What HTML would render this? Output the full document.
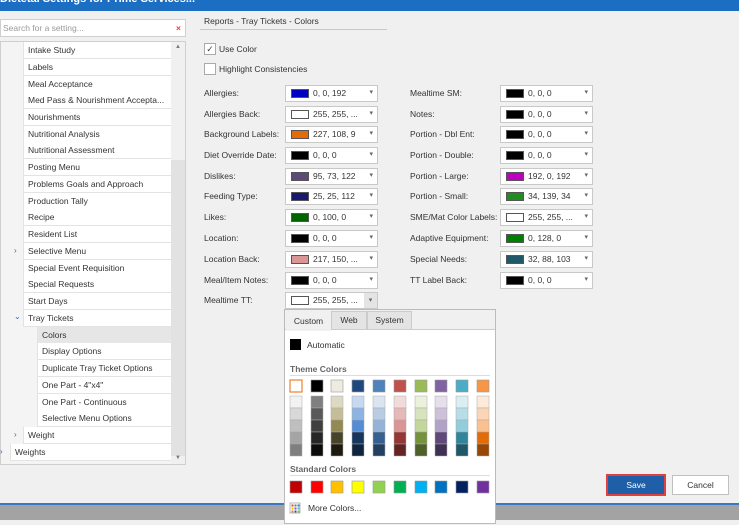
<!DOCTYPE html>
<html><head><meta charset="utf-8"><style>
*{margin:0;padding:0;box-sizing:border-box}
body{width:739px;height:520px;overflow:hidden;background:#f0f0f0;font-family:"Liberation Sans",sans-serif;font-size:8.5px;color:#333;position:relative}
.a{position:absolute}
.title{left:0;top:0;width:739px;height:11px;background:#1b6ec2;overflow:hidden}
.title div{position:absolute;left:0;top:-7px;color:#fff;font-weight:bold;font-size:11px;line-height:13px}
.tree{left:0;top:41px;width:186px;height:424px;background:#f4f4f4;border:1px solid #cfcfcf}
.it{position:absolute;height:17px;line-height:16px;background:#fff;border-bottom:1px solid #e3e3e3;border-left:1px solid #e3e3e3;right:14px;padding-left:4px;white-space:nowrap;overflow:hidden}
.sel{background:#e6e6e6}
.ex{position:absolute;font-size:8px;color:#2a6ebd}
.lbl{position:absolute;line-height:12px;white-space:nowrap}
.cb{position:absolute;width:93px;height:17px;background:#fff;border:1px solid #c8c8c8}
.cb i{position:absolute;left:5px;top:3px;width:18px;height:9px;border:1px solid #555}
.cb span{position:absolute;left:27px;top:2px;line-height:11px}
.cb b{position:absolute;right:4px;top:2px;font-weight:normal;font-size:7px;color:#666}
.chk{position:absolute;width:12px;height:12px;background:#fff;border:1px solid #aaa}
</style></head><body>
<div class="a title"><div>Dietetal Settings for Prime Services...</div></div>
<div class="a" style="left:0;top:19px;width:186px;height:18px;background:#fff;border:1px solid #cfcfcf;color:#999;line-height:16px;padding-left:2px">Search for a setting...<span style="position:absolute;right:4px;color:#e04040;font-weight:bold">×</span></div>
<div class="a tree">
<div class="it" style="left:22px;top:0">Intake Study</div>
<div class="it" style="left:22px;top:17px">Labels</div>
<div class="it" style="left:22px;top:34px">Meal Acceptance</div>
<div class="it" style="left:22px;top:50px">Med Pass &amp; Nourishment Accepta...</div>
<div class="it" style="left:22px;top:67px">Nourishments</div>
<div class="it" style="left:22px;top:84px">Nutritional Analysis</div>
<div class="it" style="left:22px;top:100px">Nutritional Assessment</div>
<div class="it" style="left:22px;top:117px">Posting Menu</div>
<div class="it" style="left:22px;top:134px">Problems Goals and Approach</div>
<div class="it" style="left:22px;top:151px">Production Tally</div>
<div class="it" style="left:22px;top:167px">Recipe</div>
<div class="it" style="left:22px;top:184px">Resident List</div>
<div class="ex" style="left:13px;top:204px">›</div>
<div class="it" style="left:22px;top:201px">Selective Menu</div>
<div class="it" style="left:22px;top:218px">Special Event Requisition</div>
<div class="it" style="left:22px;top:234px">Special Requests</div>
<div class="it" style="left:22px;top:251px">Start Days</div>
<div class="ex" style="left:13px;top:270px">⌄</div>
<div class="it" style="left:22px;top:268px">Tray Tickets</div>
<div class="it sel" style="left:36px;top:285px">Colors</div>
<div class="it" style="left:36px;top:301px">Display Options</div>
<div class="it" style="left:36px;top:318px">Duplicate Tray Ticket Options</div>
<div class="it" style="left:36px;top:335px">One Part - 4"x4"</div>
<div class="it" style="left:36px;top:352px">One Part - Continuous</div>
<div class="it" style="left:36px;top:368px">Selective Menu Options</div>
<div class="ex" style="left:13px;top:388px">›</div>
<div class="it" style="left:22px;top:385px">Weight</div>
<div class="ex" style="left:-1px;top:405px">›</div>
<div class="it" style="left:9px;top:402px">Weights</div>
<div class="a" style="right:0;top:0;width:14px;height:422px;background:#f0f0f0"></div>
<div class="a" style="right:0;top:118px;width:14px;height:296px;background:#e2e2e2"></div>
<div class="a" style="right:4px;top:2px;font-size:6px;color:#777">▲</div>
<div class="a" style="right:4px;top:413px;font-size:6px;color:#777">▼</div>
</div>

<div class="lbl" style="left:204px;top:15px">Reports - Tray Tickets - Colors</div>
<div class="a" style="left:200px;top:29px;width:187px;height:1px;background:#c8c8c8"></div>
<div class="chk" style="left:204px;top:43px;font-size:9px;line-height:10px;text-align:center;color:#444">✓</div>
<div class="lbl" style="left:219px;top:43px">Use Color</div>
<div class="chk" style="left:204px;top:63px"></div>
<div class="lbl" style="left:219px;top:63px">Highlight Consistencies</div>

<div class="lbl" style="left:204px;top:87px">Allergies:</div><div class="cb" style="left:285px;top:85px"><i style="background:#0000c0"></i><span>0, 0, 192</span><b>▾</b></div>
<div class="lbl" style="left:204px;top:108px">Allergies Back:</div><div class="cb" style="left:285px;top:106px"><i style="background:#fff"></i><span>255, 255, ...</span><b>▾</b></div>
<div class="lbl" style="left:204px;top:128px">Background Labels:</div><div class="cb" style="left:285px;top:126px"><i style="background:#e36c09"></i><span>227, 108, 9</span><b>▾</b></div>
<div class="lbl" style="left:204px;top:149px">Diet Override Date:</div><div class="cb" style="left:285px;top:147px"><i style="background:#000"></i><span>0, 0, 0</span><b>▾</b></div>
<div class="lbl" style="left:204px;top:170px">Dislikes:</div><div class="cb" style="left:285px;top:168px"><i style="background:#5f497a"></i><span>95, 73, 122</span><b>▾</b></div>
<div class="lbl" style="left:204px;top:190px">Feeding Type:</div><div class="cb" style="left:285px;top:188px"><i style="background:#191970"></i><span>25, 25, 112</span><b>▾</b></div>
<div class="lbl" style="left:204px;top:211px">Likes:</div><div class="cb" style="left:285px;top:209px"><i style="background:#006400"></i><span>0, 100, 0</span><b>▾</b></div>
<div class="lbl" style="left:204px;top:232px">Location:</div><div class="cb" style="left:285px;top:230px"><i style="background:#000"></i><span>0, 0, 0</span><b>▾</b></div>
<div class="lbl" style="left:204px;top:253px">Location Back:</div><div class="cb" style="left:285px;top:251px"><i style="background:#d99694"></i><span>217, 150, ...</span><b>▾</b></div>
<div class="lbl" style="left:204px;top:274px">Meal/Item Notes:</div><div class="cb" style="left:285px;top:272px"><i style="background:#000"></i><span>0, 0, 0</span><b>▾</b></div>
<div class="lbl" style="left:204px;top:294px">Mealtime TT:</div><div class="cb" style="left:285px;top:292px"><i style="background:#fff"></i><span>255, 255, ...</span><b style="background:#e4e4e4;right:0;top:0;width:13px;height:15px;text-align:center;line-height:15px">▾</b></div>

<div class="lbl" style="left:410px;top:87px">Mealtime SM:</div><div class="cb" style="left:500px;top:85px"><i style="background:#000"></i><span>0, 0, 0</span><b>▾</b></div>
<div class="lbl" style="left:410px;top:108px">Notes:</div><div class="cb" style="left:500px;top:106px"><i style="background:#000"></i><span>0, 0, 0</span><b>▾</b></div>
<div class="lbl" style="left:410px;top:128px">Portion - Dbl Ent:</div><div class="cb" style="left:500px;top:126px"><i style="background:#000"></i><span>0, 0, 0</span><b>▾</b></div>
<div class="lbl" style="left:410px;top:149px">Portion - Double:</div><div class="cb" style="left:500px;top:147px"><i style="background:#000"></i><span>0, 0, 0</span><b>▾</b></div>
<div class="lbl" style="left:410px;top:170px">Portion - Large:</div><div class="cb" style="left:500px;top:168px"><i style="background:#c000c0"></i><span>192, 0, 192</span><b>▾</b></div>
<div class="lbl" style="left:410px;top:190px">Portion - Small:</div><div class="cb" style="left:500px;top:188px"><i style="background:#228b22"></i><span>34, 139, 34</span><b>▾</b></div>
<div class="lbl" style="left:410px;top:211px">SME/Mat Color Labels:</div><div class="cb" style="left:500px;top:209px"><i style="background:#fff"></i><span>255, 255, ...</span><b>▾</b></div>
<div class="lbl" style="left:410px;top:232px">Adaptive Equipment:</div><div class="cb" style="left:500px;top:230px"><i style="background:#008000"></i><span>0, 128, 0</span><b>▾</b></div>
<div class="lbl" style="left:410px;top:253px">Special Needs:</div><div class="cb" style="left:500px;top:251px"><i style="background:#205867"></i><span>32, 88, 103</span><b>▾</b></div>
<div class="lbl" style="left:410px;top:274px">TT Label Back:</div><div class="cb" style="left:500px;top:272px"><i style="background:#000"></i><span>0, 0, 0</span><b>▾</b></div>

<div class="a" style="left:0;top:503px;width:739px;height:2px;background:#3a78c0"></div>
<div class="a" style="left:0;top:505px;width:739px;height:15px;background:#a3a3a3"></div>

<div class="a" style="left:606px;top:474px;width:60px;height:22px;border:2px solid #e04040;background:#1f5fa8;color:#fff;text-align:center;line-height:18px">Save</div>
<div class="a" style="left:672px;top:475px;width:57px;height:20px;border:1px solid #c0c0c0;background:#fff;text-align:center;line-height:18px">Cancel</div>

<div class="a" style="left:284px;top:309px;width:212px;height:215px;background:#fff;border:1px solid #bbb">
<div class="a" style="left:0;top:0;width:210px;height:20px;background:#f0f0f0;border-bottom:1px solid #ccc"></div>
<div class="a" style="left:1px;top:1px;width:45px;height:20px;background:#f0f0f0;text-align:center;line-height:20px">Custom</div>
<div class="a" style="left:46px;top:1px;width:36px;height:19px;background:#e4e4e4;border:1px solid #ccc;text-align:center;line-height:17px">Web</div>
<div class="a" style="left:82px;top:1px;width:45px;height:19px;background:#e4e4e4;border:1px solid #ccc;text-align:center;line-height:17px">System</div>
<div class="a" style="left:5px;top:29px;width:11px;height:11px;background:#000"></div>
<div class="lbl" style="left:22px;top:29px">Automatic</div>
<div class="lbl" style="left:5px;top:53px;font-weight:bold;color:#666">Theme Colors</div>
<div class="a" style="left:5px;top:65px;width:200px;height:1px;background:#ddd"></div>
<div class="lbl" style="left:5px;top:153px;font-weight:bold;color:#666">Standard Colors</div>
<div class="a" style="left:5px;top:165px;width:200px;height:1px;background:#ddd"></div>
<svg class="a" style="left:0;top:0" width="212" height="215" viewBox="284 309 212 215">
<g stroke="#999" stroke-width="0.6">
<rect x="289" y="379" width="12" height="12" fill="#fff" stroke="#f08030" stroke-width="1.2"/>
<rect x="310" y="379" width="12" height="12" fill="#000"/>
<rect x="330" y="379" width="12" height="12" fill="#eeece1"/>
<rect x="351" y="379" width="12" height="12" fill="#1f497d"/>
<rect x="372" y="379" width="12" height="12" fill="#4f81bd"/>
<rect x="393" y="379" width="12" height="12" fill="#c0504d"/>
<rect x="414" y="379" width="12" height="12" fill="#9bbb59"/>
<rect x="434" y="379" width="12" height="12" fill="#8064a2"/>
<rect x="455" y="379" width="12" height="12" fill="#4bacc6"/>
<rect x="476" y="379" width="12" height="12" fill="#f79646"/>
</g>
<g stroke="#aaa" stroke-width="0.5">
<rect x="289" y="395" width="12" height="12" fill="#f2f2f2"/><rect x="289" y="407" width="12" height="12" fill="#d8d8d8"/><rect x="289" y="419" width="12" height="12" fill="#bfbfbf"/><rect x="289" y="431" width="12" height="12" fill="#a5a5a5"/><rect x="289" y="443" width="12" height="12" fill="#7f7f7f"/>
<rect x="310" y="395" width="12" height="12" fill="#7f7f7f"/><rect x="310" y="407" width="12" height="12" fill="#595959"/><rect x="310" y="419" width="12" height="12" fill="#3f3f3f"/><rect x="310" y="431" width="12" height="12" fill="#262626"/><rect x="310" y="443" width="12" height="12" fill="#0c0c0c"/>
<rect x="330" y="395" width="12" height="12" fill="#ddd9c3"/><rect x="330" y="407" width="12" height="12" fill="#c4bd97"/><rect x="330" y="419" width="12" height="12" fill="#938953"/><rect x="330" y="431" width="12" height="12" fill="#494429"/><rect x="330" y="443" width="12" height="12" fill="#1d1b10"/>
<rect x="351" y="395" width="12" height="12" fill="#c6d9f0"/><rect x="351" y="407" width="12" height="12" fill="#8db3e2"/><rect x="351" y="419" width="12" height="12" fill="#548dd4"/><rect x="351" y="431" width="12" height="12" fill="#17365d"/><rect x="351" y="443" width="12" height="12" fill="#0f243e"/>
<rect x="372" y="395" width="12" height="12" fill="#dbe5f1"/><rect x="372" y="407" width="12" height="12" fill="#b8cce4"/><rect x="372" y="419" width="12" height="12" fill="#95b3d7"/><rect x="372" y="431" width="12" height="12" fill="#366092"/><rect x="372" y="443" width="12" height="12" fill="#244061"/>
<rect x="393" y="395" width="12" height="12" fill="#f2dcdb"/><rect x="393" y="407" width="12" height="12" fill="#e5b9b7"/><rect x="393" y="419" width="12" height="12" fill="#d99694"/><rect x="393" y="431" width="12" height="12" fill="#953734"/><rect x="393" y="443" width="12" height="12" fill="#632423"/>
<rect x="414" y="395" width="12" height="12" fill="#ebf1dd"/><rect x="414" y="407" width="12" height="12" fill="#d7e3bc"/><rect x="414" y="419" width="12" height="12" fill="#c3d69b"/><rect x="414" y="431" width="12" height="12" fill="#76923c"/><rect x="414" y="443" width="12" height="12" fill="#4f6128"/>
<rect x="434" y="395" width="12" height="12" fill="#e5e0ec"/><rect x="434" y="407" width="12" height="12" fill="#ccc1d9"/><rect x="434" y="419" width="12" height="12" fill="#b2a2c7"/><rect x="434" y="431" width="12" height="12" fill="#5f497a"/><rect x="434" y="443" width="12" height="12" fill="#3f3151"/>
<rect x="455" y="395" width="12" height="12" fill="#dbeef3"/><rect x="455" y="407" width="12" height="12" fill="#b7dde8"/><rect x="455" y="419" width="12" height="12" fill="#92cddc"/><rect x="455" y="431" width="12" height="12" fill="#31859b"/><rect x="455" y="443" width="12" height="12" fill="#205867"/>
<rect x="476" y="395" width="12" height="12" fill="#fdeada"/><rect x="476" y="407" width="12" height="12" fill="#fbd5b5"/><rect x="476" y="419" width="12" height="12" fill="#fac08f"/><rect x="476" y="431" width="12" height="12" fill="#e36c09"/><rect x="476" y="443" width="12" height="12" fill="#974806"/>
</g>
<g stroke="#999" stroke-width="0.6">
<rect x="289" y="480" width="12" height="12" fill="#c00000"/><rect x="310" y="480" width="12" height="12" fill="#ff0000"/><rect x="330" y="480" width="12" height="12" fill="#ffc000"/><rect x="351" y="480" width="12" height="12" fill="#ffff00"/><rect x="372" y="480" width="12" height="12" fill="#92d050"/><rect x="393" y="480" width="12" height="12" fill="#00b050"/><rect x="414" y="480" width="12" height="12" fill="#00b0f0"/><rect x="434" y="480" width="12" height="12" fill="#0070c0"/><rect x="455" y="480" width="12" height="12" fill="#002060"/><rect x="476" y="480" width="12" height="12" fill="#7030a0"/>
</g>
<g>
<rect x="289" y="502" width="10" height="10" fill="#fff" stroke="#888" stroke-width="0.6"/>
<rect x="290.5" y="503.5" width="2" height="2" fill="#e04040"/><rect x="293.5" y="503.5" width="2" height="2" fill="#40a040"/><rect x="296.5" y="503.5" width="2" height="2" fill="#4070d0"/>
<rect x="290.5" y="506.5" width="2" height="2" fill="#f0c000"/><rect x="293.5" y="506.5" width="2" height="2" fill="#a040c0"/><rect x="296.5" y="506.5" width="2" height="2" fill="#40c0c0"/>
<rect x="290.5" y="509.5" width="2" height="2" fill="#f08030"/><rect x="293.5" y="509.5" width="2" height="2" fill="#3050a0"/><rect x="296.5" y="509.5" width="2" height="2" fill="#80c040"/>
</g>
</svg>
<div class="lbl" style="left:23px;top:192px">More Colors...</div>
</div>
</body></html>
